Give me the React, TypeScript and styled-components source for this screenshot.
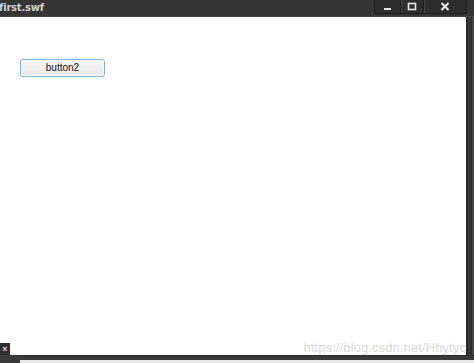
import styled, { createGlobalStyle } from "styled-components";

const GlobalStyle = createGlobalStyle`
  html, body {
    margin: 0;
    padding: 0;
    background: #ffffff;
  }
`;

const Screen = styled.div`
  position: relative;
  width: 474px;
  height: 363px;
  display: flex;
  flex-direction: column;
  overflow: hidden;
  background: #e8e8e8;
  font-family: "Liberation Sans", Arial, sans-serif;
`;

const TitleBar = styled.div`
  height: 16px;
  flex: none;
  display: flex;
  align-items: flex-start;
  justify-content: space-between;
  background: #353535;
  border-bottom: 1px solid #4a4a4a;
`;

const Title = styled.span`
  font-family: "DejaVu Sans", "Liberation Sans", sans-serif;
  font-size: 10px;
  font-weight: bold;
  color: #d0d0d0;
  line-height: 15px;
  margin-left: -1px;
  letter-spacing: -0.2px;
`;

const WinButtons = styled.div`
  display: flex;
  height: 13px;
  margin-right: 7px;
  border: 1px solid #1e1e1e;
  border-top: none;
  background: #2e2e2e;
`;

interface WinButtonProps {
  w: number;
}

const WinButton = styled.div<WinButtonProps>`
  width: ${(p) => p.w}px;
  height: 13px;
  display: flex;
  align-items: center;
  justify-content: center;
  border-left: 1px solid #1e1e1e;
  box-shadow: inset 1px 0 0 #444;
  &:first-child {
    border-left: none;
    box-shadow: none;
  }
`;

const Middle = styled.div`
  flex: 1;
  display: flex;
`;

const Content = styled.div`
  flex: 1;
  position: relative;
  background: #ffffff;
  padding: 40px 0 0 20px;
`;

const RightFrame = styled.div`
  width: 8px;
  flex: none;
  background: #3a3a3a;
  border-left: 2px solid #2c2c2c;
  box-sizing: border-box;
  box-shadow: inset -2px 0 0 #444, inset -4px 0 0 #2e2e2e;
`;

const BottomFrame = styled.div`
  height: 8px;
  flex: none;
  display: flex;
`;

const BottomEdge = styled.div`
  flex: 1;
  height: 5px;
  background: #3a3a3a;
  border-top: 1px solid #2a2a2a;
  box-sizing: border-box;
`;

const BottomCorner = styled.div`
  width: 20px;
  background: #3a3a3a;
`;

const Button = styled.button`
  width: 85px;
  height: 18px;
  padding: 0;
  border: 1px solid #7fb3e3;
  border-radius: 3px;
  background: linear-gradient(#f7f7f7, #e9e9e9);
  font-family: "Liberation Sans", Arial, sans-serif;
  font-size: 10px;
  color: #111;
  box-shadow: inset 0 0 0 1px #fbfbfb;
`;

const Watermark = styled.div`
  position: absolute;
  right: 0px;
  bottom: 0px;
  font-family: "Liberation Sans", Arial, sans-serif;
  font-size: 13px;
  color: #dadada;
  letter-spacing: 0.1px;
`;

const CloseTab = styled.div`
  position: absolute;
  left: 0;
  bottom: 8px;
  width: 10px;
  height: 12px;
  background: #2e2e2e;
  color: #ddd;
  font-size: 9px;
  font-weight: bold;
  line-height: 12px;
  text-align: center;
`;

export default function App() {
  return (
    <>
      <GlobalStyle />
      <Screen>
        <TitleBar>
          <Title>first.swf</Title>
          <WinButtons>
            <WinButton w={25}>
              <svg width="9" height="9" viewBox="0 0 9 9">
                <rect x="1" y="6" width="7" height="2" fill="#e6e6e6" />
              </svg>
            </WinButton>
            <WinButton w={22}>
              <svg width="10" height="9" viewBox="0 0 10 9">
                <rect x="1.5" y="1.5" width="7" height="6" fill="none" stroke="#e6e6e6" strokeWidth="1.6" />
              </svg>
            </WinButton>
            <WinButton w={42}>
              <svg width="10" height="9" viewBox="0 0 10 9">
                <path d="M1.5 1 L8.5 8 M8.5 1 L1.5 8" stroke="#ececec" strokeWidth="1.9" />
              </svg>
            </WinButton>
          </WinButtons>
        </TitleBar>
        <Middle>
          <Content>
            <Button>button2</Button>
            <Watermark>https://blog.csdn.net/Hhytyc</Watermark>
          </Content>
          <RightFrame />
        </Middle>
        <BottomFrame>
          <BottomCorner />
          <BottomEdge />
        </BottomFrame>
        <CloseTab>×</CloseTab>
      </Screen>
    </>
  );
}
